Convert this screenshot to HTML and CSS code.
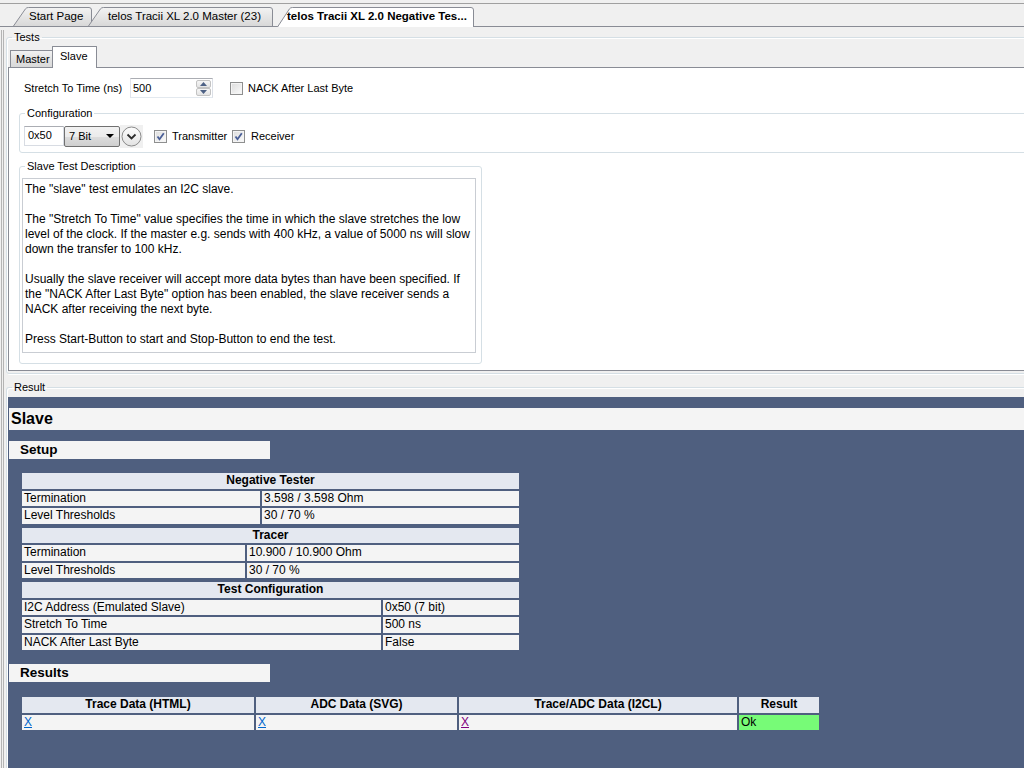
FILE: index.html
```html
<!DOCTYPE html>
<html lang="en">

<head>
  <meta charset="UTF-8">
  <title>telos Tracii XL 2.0 Negative Tester</title>
  <link rel="stylesheet" href="styles.css">
</head>

<body>
  <div class="docTabs">
    <div class="docTab t1">
      <svg width="79" height="19" viewBox="0 0 79 19">
        <defs>
          <linearGradient id="tabFill" x1="0" y1="0" x2="0" y2="1">
            <stop offset="0" stop-color="#f3f3f3" />
            <stop offset="1" stop-color="#d8d8d8" />
          </linearGradient>
        </defs>
        <path d="M0.5 19 L12.5 1.8 Q13.5 0.5 15.5 0.5 L76 0.5 Q78.5 0.5 78.5 3 L78.5 19" fill="url(#tabFill)" stroke="#898c95" />
      </svg>
      <span>Start Page</span>
    </div>
    <div class="docTab t2">
      <svg width="185" height="19" viewBox="0 0 185 19">
        <path d="M0.5 19 L12.5 1.8 Q13.5 0.5 15.5 0.5 L182 0.5 Q184.5 0.5 184.5 3 L184.5 19" fill="url(#tabFill)" stroke="#898c95" />
      </svg>
      <span>telos Tracii XL 2.0 Master (23)</span>
    </div>
    <div class="docTab t3">
      <svg width="197" height="20" viewBox="0 0 197 20">
        <path d="M0.5 20 L12.5 1.8 Q13.5 0.5 15.5 0.5 L194 0.5 Q196.5 0.5 196.5 3 L196.5 20" fill="#fff" stroke="#898c95" />
      </svg>
      <span>telos Tracii XL 2.0 Negative Tes...</span>
    </div>
  </div>

  <div class="docPage">
    <fieldset class="group testsGroup">
      <legend>Tests</legend>
      <div class="pageTabs">
        <div class="pageTab master">Master</div>
        <div class="pageTab slave">Slave</div>
      </div>
      <div class="tabPanel">
        <div class="stretchRow">
          <span class="stretchLabel">Stretch To Time (ns)</span>
          <div class="spinBox">
            <span>500</span>
            <div class="spinButtons">
              <div class="spinBtn">
                <svg width="7" height="4" viewBox="0 0 7 4"><path d="M0 4 L3.5 0 L7 4 Z" fill="#4d6185" /></svg>
              </div>
              <div class="spinBtn">
                <svg width="7" height="4" viewBox="0 0 7 4"><path d="M0 0 L3.5 4 L7 0 Z" fill="#4d6185" /></svg>
              </div>
            </div>
          </div>
          <span class="checkBox nackBox"></span>
          <span class="checkLabel">NACK After Last Byte</span>
        </div>

        <fieldset class="group configGroup">
          <legend>Configuration</legend>
          <div class="configRow">
            <div class="addrBox">0x50</div>
            <div class="comboBox">
              <span>7 Bit</span>
              <svg width="8" height="4" viewBox="0 0 8 4"><path d="M0 0 L8 0 L4 4 Z" fill="#000" /></svg>
            </div>
            <div class="roundArea">
              <svg width="21" height="21" viewBox="0 0 21 21">
                <defs>
                  <linearGradient id="roundFill" x1="0" y1="0" x2="0" y2="1">
                    <stop offset="0" stop-color="#fdfdfd" />
                    <stop offset="1" stop-color="#e2e2e2" />
                  </linearGradient>
                </defs>
                <circle cx="10.5" cy="10.5" r="9.5" fill="url(#roundFill)" stroke="#8a8a8a" />
                <path d="M6.5 8.5 L10.5 12.5 L14.5 8.5" fill="none" stroke="#2b2b2b" stroke-width="1.8" />
              </svg>
            </div>
            <span class="checkBox checked txBox">
              <svg width="11" height="11" viewBox="0 0 11 11"><path d="M2.5 5.5 L4.5 8.2 L8.8 2.2" fill="none" stroke="#4a5f97" stroke-width="1.8" /></svg>
            </span>
            <span class="checkLabel txLabel">Transmitter</span>
            <span class="checkBox checked">
              <svg width="11" height="11" viewBox="0 0 11 11"><path d="M2.5 5.5 L4.5 8.2 L8.8 2.2" fill="none" stroke="#4a5f97" stroke-width="1.8" /></svg>
            </span>
            <span class="checkLabel rxLabel">Receiver</span>
          </div>
        </fieldset>

        <fieldset class="group descGroup">
          <legend>Slave Test Description</legend>
          <div class="descText">
            The "slave" test emulates an I2C slave.<br>
            <br>
            The "Stretch To Time" value specifies the time in which the slave stretches the low<br>
            level of the clock. If the master e.g. sends with 400 kHz, a value of 5000 ns will slow<br>
            down the transfer to 100 kHz.<br>
            <br>
            Usually the slave receiver will accept more data bytes than have been specified. If<br>
            the "NACK After Last Byte" option has been enabled, the slave receiver sends a<br>
            NACK after receiving the next byte.<br>
            <br>
            Press Start-Button to start and Stop-Button to end the test.
          </div>
        </fieldset>
      </div>
    </fieldset>

    <fieldset class="group resultGroup">
      <legend>Result</legend>
      <div class="report">
        <h1>Slave</h1>
        <h2>Setup</h2>

        <table class="setupTable">
          <colgroup><col style="width: 238px"><col style="width: 257px"></colgroup>
          <tr><th colspan="2">Negative Tester</th></tr>
          <tr><td>Termination</td><td>3.598 / 3.598 Ohm</td></tr>
          <tr><td>Level Thresholds</td><td>30 / 70 %</td></tr>
        </table>
        <table class="setupTable">
          <colgroup><col style="width: 223px"><col style="width: 272px"></colgroup>
          <tr><th colspan="2">Tracer</th></tr>
          <tr><td>Termination</td><td>10.900 / 10.900 Ohm</td></tr>
          <tr><td>Level Thresholds</td><td>30 / 70 %</td></tr>
        </table>
        <table class="setupTable">
          <colgroup><col style="width: 359px"><col style="width: 136px"></colgroup>
          <tr><th colspan="2">Test Configuration</th></tr>
          <tr><td>I2C Address (Emulated Slave)</td><td>0x50 (7 bit)</td></tr>
          <tr><td>Stretch To Time</td><td>500 ns</td></tr>
          <tr><td>NACK After Last Byte</td><td>False</td></tr>
        </table>

        <h2 class="resultsHead">Results</h2>
        <table class="resultsTable">
          <colgroup>
            <col style="width: 232px"><col style="width: 201px"><col style="width: 278px"><col style="width: 80px">
          </colgroup>
          <tr>
            <th>Trace Data (HTML)</th>
            <th>ADC Data (SVG)</th>
            <th>Trace/ADC Data (I2CL)</th>
            <th>Result</th>
          </tr>
          <tr>
            <td><a href="#trace">X</a></td>
            <td><a href="#adc">X</a></td>
            <td><a class="visited" href="#i2cl">X</a></td>
            <td class="ok">Ok</td>
          </tr>
        </table>
      </div>
    </fieldset>
  </div>
</body>

</html>
```

FILE: styles.css
```css
body {
  margin: 0;
  width: 1024px;
  height: 768px;
  overflow: hidden;
  background: #f0f0f0;
  font-family: "Liberation Sans", Arial, sans-serif;
  font-size: 11px;
  color: #000;
}

/* Document tabs */
.docTabs {
  margin-top: 3px;
  height: 22px;
  border-top: 1px solid #a0a0a0;
  border-bottom: 1px solid #898c95;
  display: flex;
  align-items: flex-end;
}

.docTab {
  position: relative;
  height: 19px;
  line-height: 19px;
  font-size: 11.5px;
  white-space: nowrap;
  box-sizing: border-box;
}

.docTab svg {
  position: absolute;
  left: 0;
  top: 0;
}

.docTab span {
  position: relative;
}

.t1 {
  margin-left: 13px;
  width: 79px;
  padding-left: 16px;
}

.t2 {
  margin-left: -4px;
  width: 185px;
  padding-left: 20px;
}

.t3 {
  margin-left: 4px;
  margin-bottom: -1px;
  width: 197px;
  height: 20px;
  padding-left: 10px;
  font-weight: bold;
}

/* Page frame */
.docPage {
  margin-left: 1px;
  height: 741px;
  border-left: 3px double #b4b4b4;
}

.group {
  margin: 0;
  padding: 0;
  min-width: 0;
  border: 1px solid #d5dfe5;
  border-radius: 3px;
  box-shadow: inset 1px 1px 0 #fff, 1px 1px 0 #fff;
}

.group legend {
  margin-left: 5px;
  padding: 0 2px;
  line-height: 15px;
}

.testsGroup {
  margin: 3px 0 0 2px;
  width: 1060px;
  padding-bottom: 2px;
}

.pageTabs {
  display: flex;
  align-items: flex-end;
  height: 21px;
  margin: 1px 0 0 3px;
}

.pageTab {
  box-sizing: border-box;
  border: 1px solid #898c95;
  border-bottom: none;
}

.master {
  width: 42px;
  height: 17px;
  line-height: 16px;
  padding-left: 5px;
  background: linear-gradient(#f2f2f2, #e3e3e3 50%, #d9d9d9);
  border-right: none;
}

.slave {
  position: relative;
  width: 45px;
  height: 22px;
  margin-bottom: -1px;
  line-height: 18px;
  padding-left: 7px;
  background: #fff;
  border-top-left-radius: 1px;
  border-top-right-radius: 1px;
}

.tabPanel {
  margin-left: 1px;
  padding: 10px 0 6px 10px;
  background: #fff;
  border: 1px solid #898c95;
}

/* Stretch row */
.stretchRow {
  display: flex;
  align-items: center;
  height: 20px;
  padding-left: 5px;
}

.stretchLabel {
  width: 106px;
}

.spinBox {
  box-sizing: border-box;
  width: 83px;
  height: 20px;
  padding: 1px 1px 1px 2px;
  display: flex;
  justify-content: space-between;
  border: 1px solid #abadb3;
  border-color: #abadb3 #dbdfe6 #e3e9ef #e2e3ea;
  line-height: 16px;
}

.spinButtons {
  display: flex;
  flex-direction: column;
  width: 15px;
}

.spinBtn {
  box-sizing: border-box;
  height: 8.5px;
  display: flex;
  align-items: center;
  justify-content: center;
  border: 1px solid #c3c3c3;
  border-radius: 2px;
  background: linear-gradient(#f6f6f6, #e4e4e4);
}

.checkBox {
  box-sizing: border-box;
  width: 13px;
  height: 13px;
  display: inline-flex;
  align-items: center;
  justify-content: center;
  border: 1px solid #8e8f8f;
  background: linear-gradient(135deg, #dcdcdc, #fbfbfb);
  box-shadow: inset 0 0 0 1px #f4f4f4;
}

.nackBox {
  margin-left: 17px;
}

.checkLabel {
  margin-left: 5px;
}

/* Configuration */
.configGroup {
  margin-top: 8px;
  width: 1050px;
}

.configRow {
  display: flex;
  align-items: center;
  height: 22px;
  margin: 4px 0 5px 4px;
}

.addrBox {
  box-sizing: border-box;
  width: 40px;
  height: 20px;
  padding-left: 3px;
  line-height: 17px;
  border: 1px solid #d8dce3;
  border-top-color: #abadb3;
}

.comboBox {
  box-sizing: border-box;
  width: 56px;
  height: 21px;
  padding: 0 5px 0 4px;
  display: flex;
  align-items: center;
  justify-content: space-between;
  border: 1px solid #707070;
  border-radius: 2px;
  background: linear-gradient(#f2f2f2, #ebebeb 50%, #dddddd 50%, #cfcfcf);
}

.roundArea {
  width: 23px;
  height: 23px;
  display: flex;
  align-items: center;
  justify-content: center;
  background: #f0f0f0;
}

.txBox {
  margin-left: 11px;
}

.txLabel {
  width: 60px;
}

.rxLabel {
  margin-left: 6px;
}

/* Description */
.descGroup {
  margin-top: 6px;
  width: 463px;
  box-sizing: border-box;
  padding-bottom: 10px;
}

.descText {
  box-sizing: border-box;
  width: 454px;
  height: 175px;
  margin: 4px 0 0 2px;
  padding: 3px 2px;
  border: 1px solid #c9cdd3;
  font-size: 12px;
  line-height: 15px;
  white-space: nowrap;
  background: #fff;
}

/* Result */
.resultGroup {
  margin: 6px 0 0 2px;
  width: 1060px;
  border-bottom: none;
}

.report {
  margin: 2px 0 0 1px;
  height: 380px;
  padding-top: 11px;
  background: #4f5f7f;
}

.report h1 {
  margin: 0 0 0 1px;
  height: 22px;
  padding-left: 2px;
  line-height: 22px;
  font-size: 16px;
  background: #f4f4f4;
}

.report h2 {
  box-sizing: border-box;
  margin: 11px 0 0 1px;
  width: 261px;
  height: 18px;
  padding-left: 11px;
  line-height: 18px;
  font-size: 13.5px;
  background: #f4f4f4;
}

.report h2.resultsHead {
  margin-top: 12px;
}

.report table {
  margin-left: 12px;
  border-spacing: 2px;
  table-layout: fixed;
  font-size: 12px;
}

.setupTable:first-of-type {
  margin-top: 12px;
}

.resultsTable {
  margin-top: 13px;
}

.report th,
.report td {
  height: 15.5px;
  padding: 0 2px;
  line-height: 15px;
  white-space: nowrap;
  overflow: hidden;
}

.report th {
  background: #e4e8f0;
  text-align: center;
}

.report td {
  background: #f4f4f4;
}

.report a {
  color: #0066cc;
}

.report a.visited {
  color: #800080;
}

.report td.ok {
  background: #77fb77;
}
```
